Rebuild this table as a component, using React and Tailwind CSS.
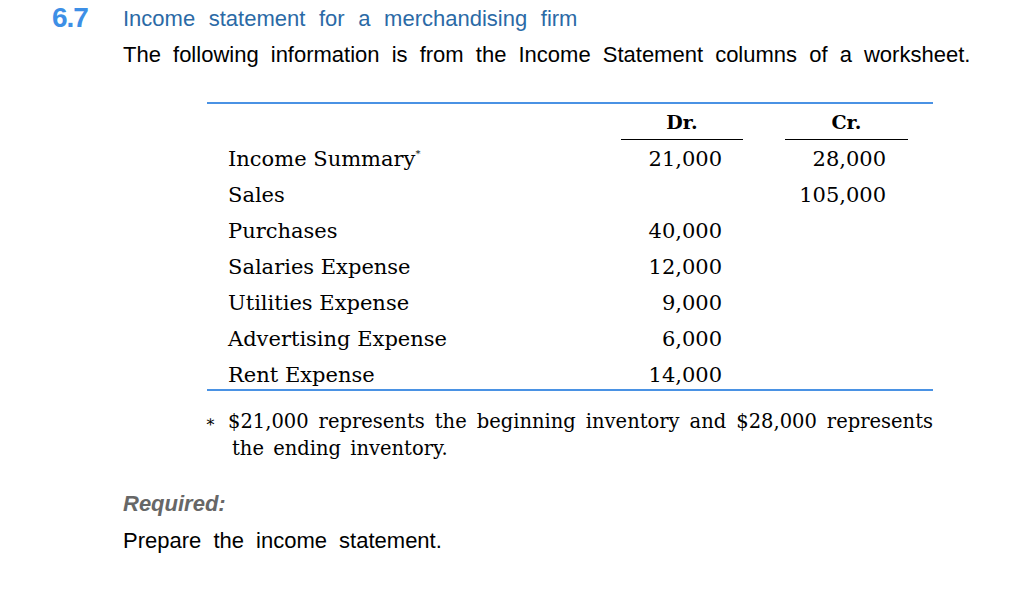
const rows = [
  { label: 'Income Summary', star: true, dr: '21,000', cr: '28,000' },
  { label: 'Sales', dr: '', cr: '105,000' },
  { label: 'Purchases', dr: '40,000', cr: '' },
  { label: 'Salaries Expense', dr: '12,000', cr: '' },
  { label: 'Utilities Expense', dr: '9,000', cr: '' },
  { label: 'Advertising Expense', dr: '6,000', cr: '' },
  { label: 'Rent Expense', dr: '14,000', cr: '' },
];

export default function App() {
  return (
    <div className="w-[1024px] h-[593px] bg-white overflow-hidden font-['Liberation_Sans',Arial,sans-serif]">
      {/* Heading */}
      <div className="flex h-[36px] items-center">
        <div className="w-[123px] pl-[52px] text-[28px] font-bold text-[#3d8fe6] tracking-[-1px]">6.7</div>
        <div className="text-[22px] text-[#2b6aa6] [word-spacing:7.5px]">Income statement for a merchandising firm</div>
      </div>
      <div className="pl-[123px] h-[36px] flex items-center text-[22px] text-black [word-spacing:6px]">
        The following information is from the Income Statement columns of a worksheet.
      </div>

      {/* Worksheet table */}
      <div className="ml-[207px] mt-[30px] w-[726px] border-t-2 border-b-2 border-[#4a92e4] font-['DejaVu_Serif',serif] text-[21px] text-black">
        <div className="flex h-[36px] items-end">
          <div className="w-[414px]" />
          <div className="w-[122px] border-b border-black text-center font-bold text-[19px] pb-[3px]">Dr.</div>
          <div className="w-[123px] ml-[42px] border-b border-black text-center font-bold text-[19px] pb-[3px]">Cr.</div>
        </div>
        <div className="h-[249px]">
          {rows.map((r) => (
            <div key={r.label} className="flex h-[36px] items-center pt-[4px]">
              <div className="w-[414px] pl-[21px]">
                {r.label}
                {r.star && <span className="text-[10px] relative -top-[9px]">*</span>}
              </div>
              <div className="w-[122px] pr-[21px] text-right">{r.dr}</div>
              <div className="w-[123px] ml-[42px] pr-[22px] text-right">{r.cr}</div>
            </div>
          ))}
        </div>
      </div>

      {/* Footnote */}
      <div className="ml-[203px] mt-[17px] flex font-['DejaVu_Serif',serif] text-[19.5px] leading-[27px] text-black">
        <div className="w-[25px] shrink-0 text-[16px] pl-[2px]">∗</div>
        <div className="w-[705px]">
          <span className="block text-justify [text-align-last:justify]">
            $21,000 represents the beginning inventory and $28,000 represents
          </span>
          <span className="block pl-[4px] [word-spacing:3px]">the ending inventory.</span>
        </div>
      </div>

      {/* Required */}
      <div className="pl-[123px] mt-[23px]">
        <div className="h-[36px] flex items-center text-[22px] font-bold italic text-[#676767]">Required:</div>
        <div className="h-[38px] flex items-center text-[22px] text-black [word-spacing:6px]">Prepare the income statement.</div>
      </div>
    </div>
  );
}
